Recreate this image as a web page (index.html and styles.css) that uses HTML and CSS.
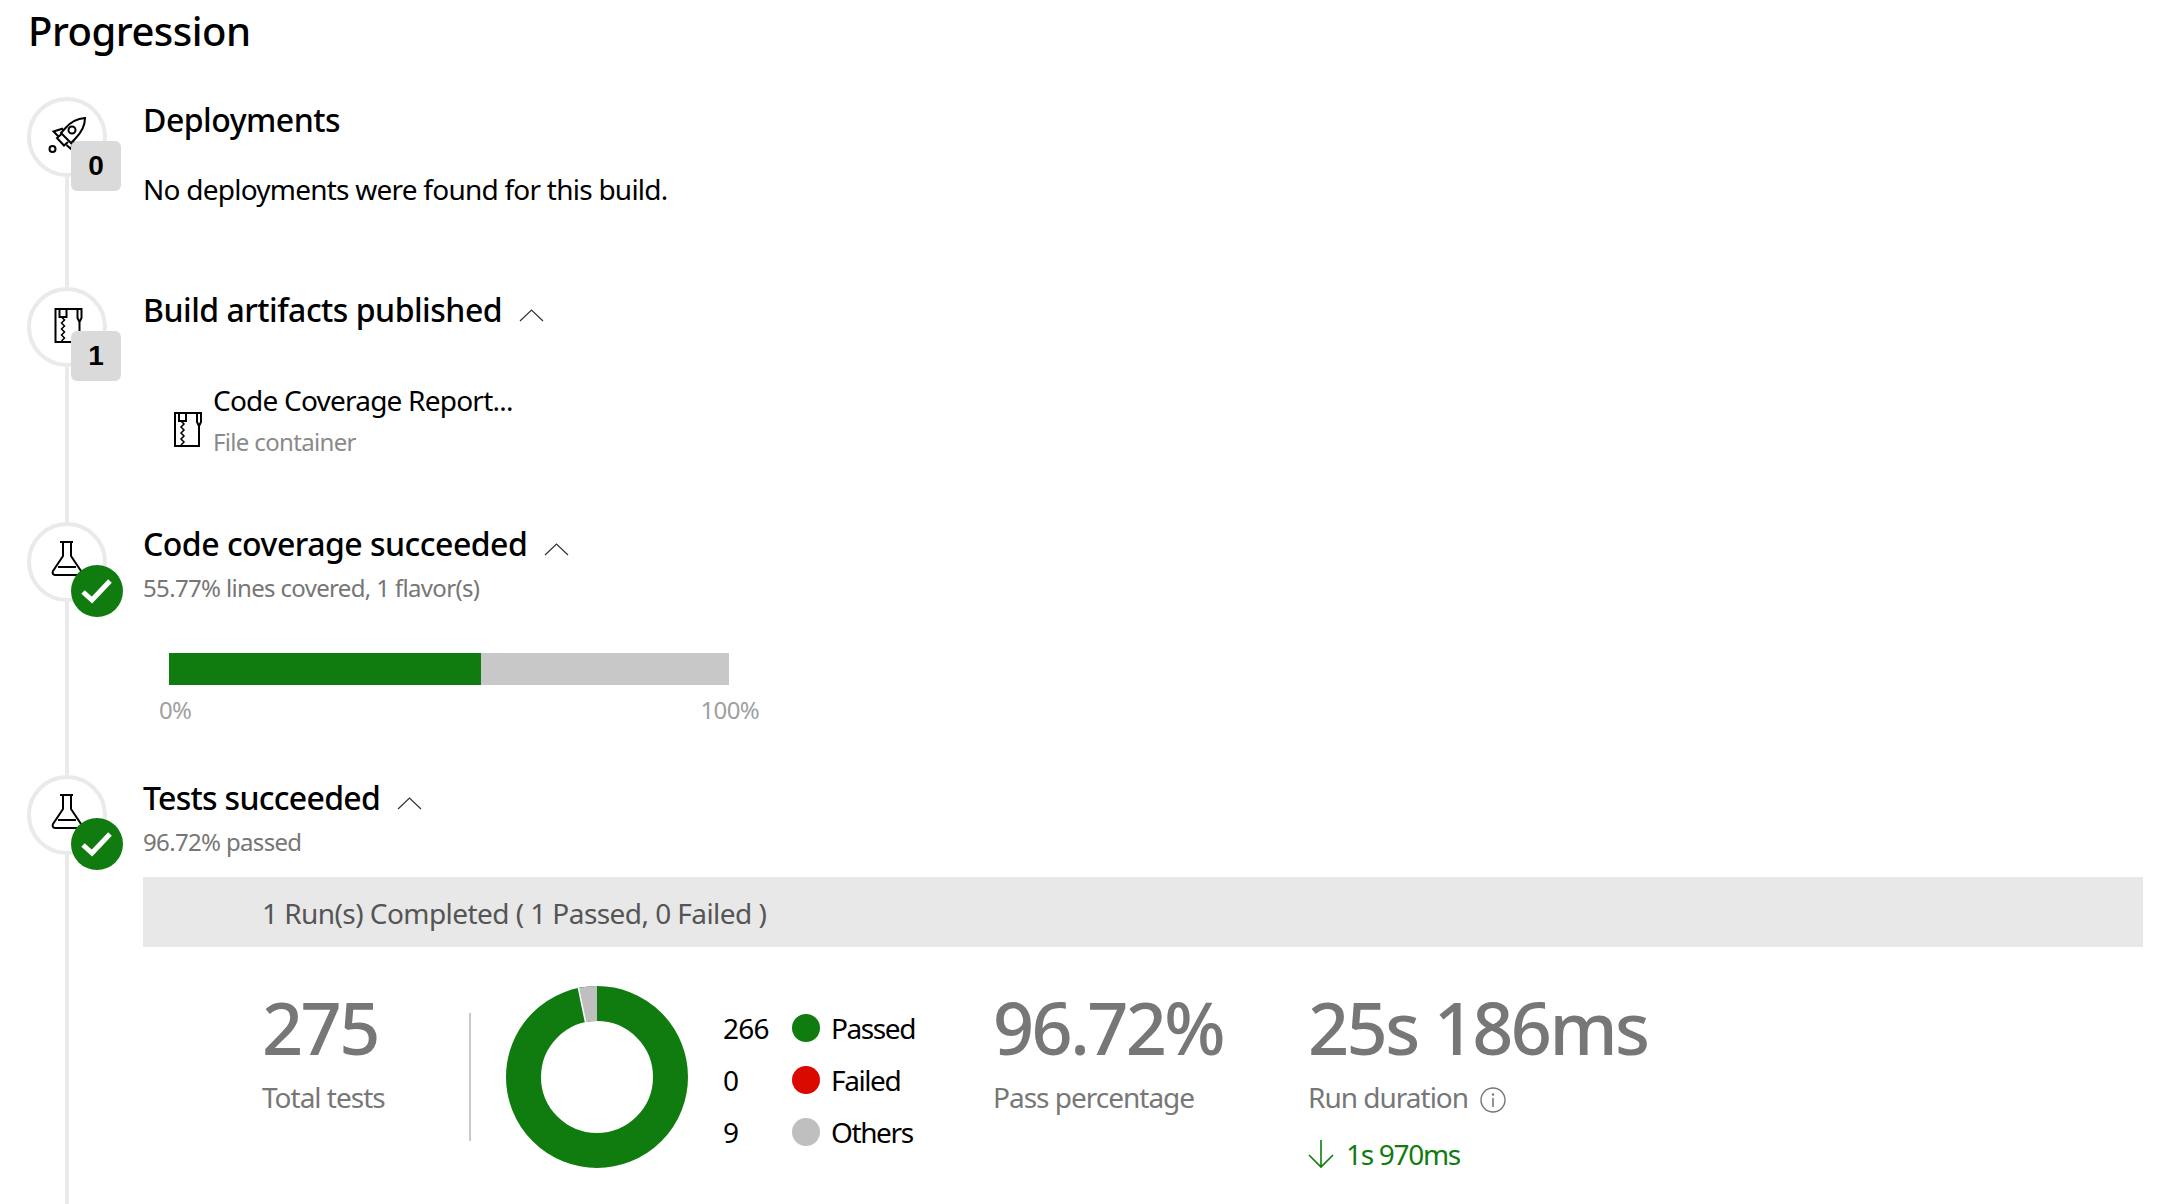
FILE: index.html
```html
<!DOCTYPE html>
<html lang="en">
  <head>
    <meta charset="UTF-8" />
    <title>Progression</title>
    <link rel="stylesheet" href="styles.css">
  </head>
  <body>
    <svg class="defs" width="0" height="0">
      <symbol id="zip" viewBox="0 0 28 35">
        <path d="M1 1H27V10L25 14V34H1Z M23 1V10L25 14 M5 1V9H12V1" fill="none" stroke="#000" stroke-width="2"/>
        <path d="M7 9L10 12L7 15L10 18L7 21L10 24L7 27L10 30L7 33" fill="none" stroke="#000" stroke-width="1.5"/>
      </symbol>
      <symbol id="flask" viewBox="0 0 34 36">
        <path d="M10 2H23 M13 2V16L3 31C2 33 3 35 5 35H29C31 35 32 33 31 31L21 16V2 M8 27H26" fill="none" stroke="#000" stroke-width="2"/>
      </symbol>
      <symbol id="check" viewBox="0 0 52 52">
        <circle cx="26" cy="26" r="26" fill="#107c10"/>
        <path d="M12 27L21 35L39 16" fill="none" stroke="#fff" stroke-width="5"/>
      </symbol>
      <symbol id="chevron" viewBox="0 0 25 13">
        <path d="M1 12L12.5 1L24 12" fill="none" stroke="#333" stroke-width="1.2"/>
      </symbol>
    </svg>

    <h1 class="page-title">Progression</h1>

    <section class="step step-deploy">
      <div class="rail">
        <div class="circle">
          <svg class="icon-rocket" width="38" height="38" viewBox="0 0 38 38">
            <path d="M37 2C37 9 33 17 27 23L23 27L13 17L17 12.5C22 6.5 30 2.5 37 2Z M15 12.5L5.5 15.5L10 20 M26 24L23 33L18.5 29 M13 18.5L9 22L16 29.5L20 26" fill="none" stroke="#000" stroke-width="2"/>
            <circle cx="24" cy="14" r="3.5" fill="none" stroke="#000" stroke-width="2"/>
            <circle cx="4.5" cy="33" r="3" fill="none" stroke="#000" stroke-width="2"/>
          </svg>
          <span class="count">0</span>
        </div>
        <div class="line"></div>
      </div>
      <div class="body">
        <h2 class="step-title">Deployments</h2>
        <p class="empty">No deployments were found for this build.</p>
      </div>
    </section>

    <section class="step step-artifacts">
      <div class="rail">
        <div class="circle">
          <svg class="icon-zip" width="29" height="35"><use href="#zip"/></svg>
          <span class="count">1</span>
        </div>
        <div class="line"></div>
      </div>
      <div class="body">
        <h2 class="step-title">Build artifacts published <svg class="chevron" width="25" height="13"><use href="#chevron"/></svg></h2>
        <div class="artifact">
          <svg class="artifact-icon" width="28" height="35"><use href="#zip"/></svg>
          <div>
            <div class="artifact-name">Code Coverage Report...</div>
            <div class="sub artifact-type">File container</div>
          </div>
        </div>
      </div>
    </section>

    <section class="step step-coverage">
      <div class="rail">
        <div class="circle">
          <svg class="icon-flask" width="34" height="36"><use href="#flask"/></svg>
          <svg class="ok" width="52" height="52"><use href="#check"/></svg>
        </div>
        <div class="line"></div>
      </div>
      <div class="body">
        <h2 class="step-title">Code coverage succeeded <svg class="chevron" width="25" height="13"><use href="#chevron"/></svg></h2>
        <p class="sub">55.77% lines covered, 1 flavor(s)</p>
        <div class="coverage">
          <div class="bar"><div class="bar-fill" style="width:55.77%"></div></div>
          <div class="scale"><span>0%</span><span>100%</span></div>
        </div>
      </div>
    </section>

    <section class="step step-tests">
      <div class="rail">
        <div class="circle">
          <svg class="icon-flask" width="34" height="36"><use href="#flask"/></svg>
          <svg class="ok" width="52" height="52"><use href="#check"/></svg>
        </div>
        <div class="line"></div>
      </div>
      <div class="body">
        <h2 class="step-title title-tests">Tests succeeded <svg class="chevron" width="25" height="13"><use href="#chevron"/></svg></h2>
        <p class="sub sub-tests">96.72% passed</p>
        <div class="band">1 Run(s) Completed ( 1 Passed, 0 Failed )</div>
        <div class="summary">
          <div class="stat stat-total">
            <div class="stat-value">275</div>
            <div class="stat-label">Total tests</div>
          </div>
          <div class="divider"></div>
          <svg class="donut" width="182" height="182" viewBox="0 0 182 182">
            <circle cx="91" cy="91" r="73.5" fill="none" stroke="#107c10" stroke-width="35"/>
            <path d="M91 0A91 91 0 0 0 72.4 1.92L79.55 36.2A56 56 0 0 1 91 35Z" fill="#bfbfbf"/>
            <path d="M72.4 1.92L79.55 36.2" stroke="#fff" stroke-width="1.5"/>
          </svg>
          <div class="legend">
            <span>266</span><i class="dot dot-pass"></i><span>Passed</span>
            <span>0</span><i class="dot dot-fail"></i><span>Failed</span>
            <span>9</span><i class="dot dot-other"></i><span>Others</span>
          </div>
          <div class="stat stat-pass">
            <div class="stat-value">96.72%</div>
            <div class="stat-label">Pass percentage</div>
          </div>
          <div class="stat">
            <div class="stat-value">25s 186ms</div>
            <div class="stat-label">Run duration
              <svg class="info" width="26" height="26" viewBox="0 0 26 26">
                <circle cx="13" cy="13" r="12" fill="none" stroke="#777" stroke-width="1.4"/>
                <path d="M13 11V20" stroke="#777" stroke-width="1.6"/>
                <circle cx="13" cy="7.5" r="1.2" fill="#777"/>
              </svg>
            </div>
            <div class="delta">
              <svg width="26" height="29" viewBox="0 0 26 29"><path d="M13 0V27M1 15L13 27L25 15" fill="none" stroke="#107c10" stroke-width="1.6"/></svg>
              <span>1s 970ms</span>
            </div>
          </div>
        </div>
      </div>
    </section>
  </body>
</html>
```

FILE: styles.css
```css
* {
  margin: 0;
  padding: 0;
  box-sizing: border-box;
}
html, body {
  height: 1204px;
  overflow: hidden;
}
body {
  background: #fff;
  color: #000;
  font-family: 'Noto Sans', sans-serif;
  padding: 0 32px 0 27px;
}
.defs {
  display: block;
  height: 0;
}
.page-title {
  font-size: 40px;
  font-weight: 500;
  letter-spacing: -0.5px;
  line-height: 56px;
  height: 97px;
  padding-left: 1px;
  padding-top: 3px;
}
.step {
  display: flex;
  gap: 36px;
}
.step-deploy { height: 190px; }
.step-artifacts { height: 235px; }
.step-coverage { height: 253px; }
.step-tests { height: 429px; }
.rail {
  width: 80px;
  flex: none;
  display: flex;
  flex-direction: column;
}
.line {
  flex: 1;
  width: 4px;
  margin-left: 38px;
  background: #eaeaea;
}
.circle {
  width: 80px;
  height: 80px;
  border: 4px solid #eaeaea;
  border-radius: 50%;
  position: relative;
  flex: none;
}
.circle svg {
  position: absolute;
}
.icon-rocket { left: 17px; top: 15px; }
.icon-zip { left: 23px; top: 17px; }
.icon-flask { left: 19px; top: 14px; }
.count {
  position: absolute;
  left: 40px;
  top: 40px;
  width: 50px;
  height: 50px;
  border-radius: 6px;
  background: #dadada;
  font-family: 'Liberation Sans', sans-serif;
  font-weight: 700;
  font-size: 28px;
  line-height: 50px;
  text-align: center;
}
.circle .ok {
  left: 40px;
  top: 39px;
}
.body {
  flex: 1;
  min-width: 0;
}
.step-title {
  font-size: 32px;
  font-weight: 500;
  letter-spacing: -0.5px;
  line-height: 44px;
  padding-top: 1px;
  white-space: nowrap;
}
.step-coverage .step-title {
  padding-top: 0;
}
.title-tests {
  letter-spacing: -0.7px;
}
.chevron {
  margin-left: 9px;
}
.empty {
  font-size: 28px;
  letter-spacing: -0.76px;
  line-height: 36px;
  margin-top: 29px;
}
.sub {
  font-size: 24px;
  letter-spacing: -0.66px;
  line-height: 32px;
  color: #767676;
  margin-top: 5px;
}
.step-coverage .sub {
  margin-top: 6px;
}
.sub-tests {
  margin-top: 6px;
}
.artifact {
  display: flex;
  align-items: flex-end;
  gap: 11px;
  margin-top: 50px;
  padding-left: 31px;
}
.artifact-icon {
  margin-bottom: 11px;
}
.artifact-name {
  font-size: 28px;
  letter-spacing: -0.78px;
  line-height: 36px;
}
.artifact-type {
  margin-top: 8px;
  color: #8a8a8a;
}
.coverage {
  width: 600px;
  margin: 49px 0 0 16px;
}
.bar {
  width: 560px;
  height: 32px;
  margin-left: 10px;
  background: #c8c8c8;
}
.bar-fill {
  height: 100%;
  background: #107c10;
}
.scale {
  display: flex;
  justify-content: space-between;
  font-size: 24px;
  letter-spacing: -0.66px;
  line-height: 32px;
  margin-top: 9px;
  color: #a0a0a0;
}
.band {
  height: 70px;
  margin-top: 19px;
  padding-left: 119px;
  background: #e8e8e8;
  color: #555;
  font-size: 28px;
  letter-spacing: -0.56px;
  line-height: 73px;
}
.summary {
  display: flex;
  align-items: flex-start;
  padding: 32px 0 0 119px;
}
.stat-total {
  width: 207px;
}
.stat-pass {
  width: 315px;
}
.stat-value {
  font-size: 72px;
  font-weight: 500;
  letter-spacing: -2.6px;
  line-height: 96px;
  color: #777;
  white-space: nowrap;
}
.stat-label {
  font-size: 28px;
  letter-spacing: -1px;
  line-height: 36px;
  margin-top: 4px;
  color: #777;
  white-space: nowrap;
}
.divider {
  width: 2px;
  height: 128px;
  margin-top: 34px;
  background: #c8c8c8;
}
.donut {
  margin: 7px 35px 0 35px;
}
.legend {
  width: 270px;
  margin-top: 23px;
  display: grid;
  grid-template-columns: 69px 28px auto;
  grid-auto-rows: 52px;
  align-items: center;
  font-size: 28px;
  letter-spacing: -0.76px;
  line-height: 52px;
}
.legend span:nth-child(3n) {
  padding-left: 11px;
  letter-spacing: -1.4px;
}
.dot {
  width: 28px;
  height: 28px;
  border-radius: 50%;
}
.dot-pass { background: #107c10; }
.dot-fail { background: #da0a00; }
.dot-other { background: #bfbfbf; }
.info {
  margin-left: 6px;
  vertical-align: -5px;
}
.delta {
  display: flex;
  align-items: center;
  gap: 12px;
  margin-top: 21px;
  font-size: 28px;
  letter-spacing: -1.3px;
  line-height: 36px;
  color: #107c10;
}
```
